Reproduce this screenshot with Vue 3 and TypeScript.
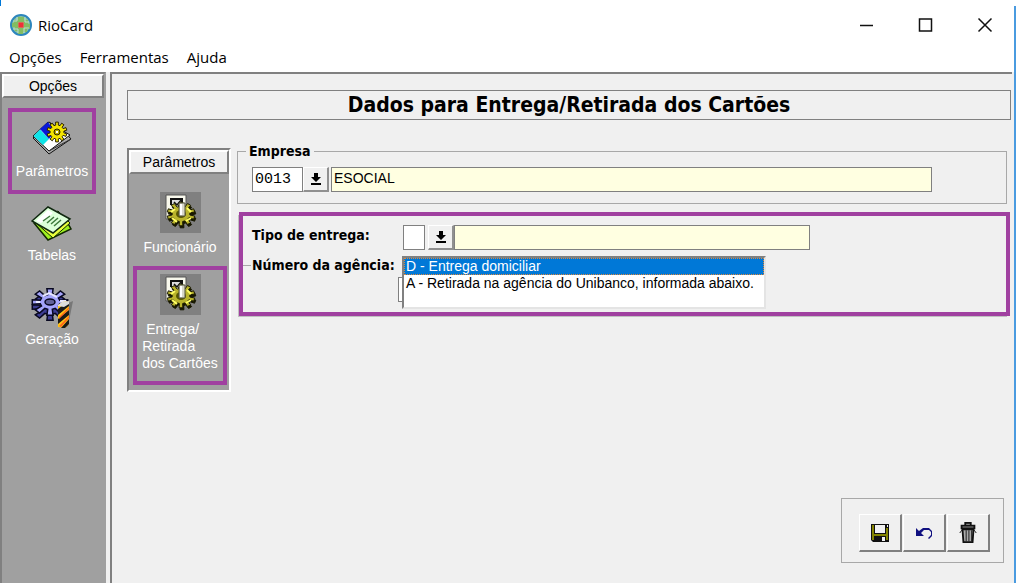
<script setup lang="ts">
import { ref } from 'vue'

interface DeliveryType {
  code: string
  text: string
}

interface SubItem {
  lines: string[]
  marked: boolean
}

const menus: string[] = ['Opções', 'Ferramentas', 'Ajuda']
const subItems: SubItem[] = [
  { lines: ['Funcionário'], marked: false },
  { lines: ['\u00a0Entrega/', 'Retirada', 'dos Cartões'], marked: true },
]
const companyCode = ref('0013')
const companyName = ref('ESOCIAL')
const typeCode = ref('')
const typeName = ref('')
const agency = ref('')
const selectedType = ref('D')
const deliveryTypes: DeliveryType[] = [
  { code: 'D', text: 'D - Entrega domiciliar' },
  { code: 'A', text: 'A - Retirada na agência do Unibanco, informada abaixo.' },
]

function gear(cx: number, cy: number, inner: number, outer: number, teeth: number, squash = 1): string {
  const points: string[] = []
  const step = (Math.PI * 2) / teeth
  for (let i = 0; i < teeth; i++) {
    const a = i * step - Math.PI / 2
    const corners: [number, number][] = [
      [inner, -0.3],
      [outer, -0.22],
      [outer, 0.22],
      [inner, 0.3],
    ]
    for (const [r, offset] of corners) {
      const t = a + offset * step
      points.push(`${(cx + r * Math.cos(t)).toFixed(1)} ${(cy + r * squash * Math.sin(t)).toFixed(1)}`)
    }
  }
  return `M${points.join('L')}Z`
}

const yellowGear = gear(26, 14, 7, 10, 10)
const blueGear = gear(19, 16, 10, 18, 8, 0.75)
const goldGear = gear(21, 22, 9, 14, 10, 0.85)
</script>

<template>
  <div class="desktop">
    <div class="window">
      <header class="titlebar">
        <svg class="logo" viewBox="0 0 22 22" aria-hidden="true">
          <circle cx="11" cy="11" r="10" fill="#8cc5a0" stroke="#2d86bd" stroke-width="2" />
          <path d="M4 6h4V3h6v3h4v4h2v5h-3v3h-4v2H8v-3H5v-4H2V9h2z" fill="#83bd62" />
          <path d="M3 7h4V3M15 3v5h4M3 15h5v4M14 19v-5h5" fill="none" stroke="#b9dcd3" stroke-width="1" />
          <path d="M8 8h6v6H8z" fill="#b9a574" />
          <path d="M8.500 8.500h5v5h-5z" fill="#ef3038" />
        </svg>
        <span class="app-name">RioCard</span>
        <div class="window-buttons">
          <button type="button" aria-label="Minimizar">
            <svg viewBox="0 0 16 16"><path d="M1 8.500h13" /></svg>
          </button>
          <button type="button" aria-label="Maximizar">
            <svg viewBox="0 0 16 16"><path d="M1.500 2h12v12h-12z" /></svg>
          </button>
          <button type="button" aria-label="Fechar">
            <svg viewBox="0 0 16 16"><path d="M1.500 1.500l13 13M14.500 1.500l-13 13" /></svg>
          </button>
        </div>
      </header>

      <nav class="menubar">
        <button v-for="menu in menus" :key="menu" type="button">{{ menu }}</button>
      </nav>

      <div class="body">
        <aside class="sidebar">
          <button type="button" class="group-head">Opções</button>
          <div class="side-items">
            <button type="button" class="side-item marked">
              <svg viewBox="0 0 42 44" aria-hidden="true">
                <path d="M2 20L18 36L40 21L34 14L18 4Z" fill="#aaa" stroke="#111" />
                <path d="M2 18L17 4L39 17L18 33Z" fill="#fff" stroke="#111" />
                <path d="M2.500 18L9 11.500L18 21L12 27Z" fill="#10e4e8" />
                <path d="M9 11L17 4L24 14L18 21Z" fill="#0818d8" />
                <path d="M18 33L40 21" stroke="#333" fill="none" />
                <path :d="yellowGear" fill="#f4e500" stroke="#292200" />
                <circle cx="26" cy="14" r="3" fill="#b8ad00" stroke="#292200" />
                <path d="M25 13h2v2h-2z" fill="#fff" />
              </svg>
              <span>Parâmetros</span>
            </button>
            <button type="button" class="side-item">
              <svg viewBox="0 0 42 44" aria-hidden="true">
                <path d="M3 21L17 38L40 27L35 18Z" fill="#9ef01e" stroke="#102800" stroke-width="1.500" />
                <path d="M4 20L22 36L39 21L27 9Z" fill="#e8ff3c" stroke="#102800" />
                <path d="M1 19L17 5L39 17L22 31Z" fill="#dcffd9" stroke="#102810" stroke-width="1.500" />
                <path d="M5 19L17 8L22 11L10 21Z" fill="#fff" />
                <path d="M12 19L19 14M16 21L23 15M20 22L27 16M23 24L30 18" stroke="#3d793c" stroke-width="1.500" />
              </svg>
              <span>Tabelas</span>
            </button>
            <button type="button" class="side-item">
              <svg viewBox="0 0 42 44" aria-hidden="true">
                <path d="M35 18L42 15L37 40L33 42Z" fill="#777" />
                <path :d="blueGear" transform="translate(0 5)" fill="#3c3c92" stroke="#080820" stroke-width="1.500" />
                <path :d="blueGear" fill="#a4a4fa" stroke="#080820" stroke-width="1.500" />
                <path d="M12 10L18 7L26 11M9 16H5M29 15H35" stroke="#e7e7ff" stroke-width="2" fill="none" />
                <ellipse cx="19" cy="16" rx="5" ry="3" fill="#626298" stroke="#080820" stroke-width="1.500" />
                <path d="M27 19L31 16L38 15V38L34 42L27 41Z" fill="#ffc515" />
                <path d="M27 23L37 15H38V20L27 29ZM27 33L38 24V29L27 38ZM30 42L38 33V38L34 42Z" fill="#191919" />
                <path d="M28 31L38 21V23L28 33ZM28 40L38 30V32L30 41Z" fill="#ff651b" />
                <path d="M27 19L31 16L38 15V18L33 21L27 20Z" fill="#ddd" />
              </svg>
              <span>Geração</span>
            </button>
          </div>
        </aside>

        <main class="main">
          <h1>Dados para Entrega/Retirada dos Cartões</h1>
          <div class="content">
            <section class="subpanel">
              <button type="button" class="group-head">Parâmetros</button>
              <div class="sub-items">
                <button
                  v-for="item in subItems"
                  :key="item.lines[0]"
                  type="button"
                  class="sub-item"
                  :class="{ marked: item.marked }"
                >
                  <svg viewBox="0 0 41 41" aria-hidden="true">
                    <path d="M0 0H41V41H0Z" fill="#808080" />
                    <path d="M6 3H26V27H6Z" fill="#f8f8ec" stroke="#555" />
                    <path d="M11 13V7H22V14H18" fill="#ddd" stroke="#111" stroke-width="2" />
                    <path d="M14 10L17 13L22 7" fill="none" stroke="#111" stroke-width="1.500" />
                    <path :d="goldGear" transform="translate(1 2)" fill="#171700" stroke="#171700" />
                    <path :d="goldGear" fill="#b9b42c" stroke="#171700" />
                    <path d="M11 20L15 17M27 16L31 20M12 26L17 30M26 29L31 26" stroke="#ffff65" stroke-width="2" />
                    <ellipse cx="21" cy="22" rx="5" ry="4" fill="#565600" />
                    <path d="M19 11H25V24H19Z" fill="#d7d7ca" stroke="#55553c" />
                    <path d="M20 12H22V23H20Z" fill="#fff" />
                  </svg>
                  <span class="caption">
                    <span v-for="line in item.lines" :key="line">{{ line }}</span>
                  </span>
                </button>
              </div>
            </section>

            <form class="form" @submit.prevent>
              <fieldset class="company">
                <legend>Empresa</legend>
                <div class="field-row">
                  <input v-model="companyCode" class="code" aria-label="Código da empresa" />
                  <button type="button" class="drop" aria-label="Escolher empresa">
                    <svg viewBox="0 0 12 14"><path d="M4 1H8V5H11L6 10L1 5H4ZM1 11H11V13H1Z" /></svg>
                  </button>
                  <input v-model="companyName" class="name company-name" aria-label="Nome da empresa" readonly />
                </div>
              </fieldset>

              <div class="delivery">
                <div class="field-row">
                  <label for="type-code">Tipo de entrega:</label>
                  <input id="type-code" v-model="typeCode" class="type-code" />
                  <button type="button" class="drop type-drop" aria-label="Escolher tipo de entrega">
                    <svg viewBox="0 0 12 14"><path d="M4 1H8V5H11L6 10L1 5H4ZM1 11H11V13H1Z" /></svg>
                  </button>
                  <input v-model="typeName" class="name type-name" aria-label="Descrição do tipo de entrega" readonly />
                </div>
                <div class="agency-row">
                  <label for="agency">Número da agência:</label>
                  <div class="agency-anchor">
                    <input id="agency" v-model="agency" class="agency" />
                    <select v-model="selectedType" class="options" size="3" aria-label="Tipo de entrega">
                      <option v-for="item in deliveryTypes" :key="item.code" :value="item.code">{{ item.text }}</option>
                    </select>
                  </div>
                </div>
              </div>
            </form>
          </div>

          <div class="toolbar">
            <button type="button" aria-label="Salvar">
              <svg viewBox="0 0 20 20">
                <path d="M1 1H19V19H3L1 17Z" fill="#111" />
                <path d="M2 2H4V17H2ZM16 5H18V17H16ZM4 11H16V13H4Z" fill="#858500" />
                <path d="M5 2H15V10H5ZM12 14H15V18H12ZM17 2H18V4H17Z" fill="#f2f2f2" />
              </svg>
            </button>
            <button type="button" aria-label="Desfazer">
              <svg viewBox="0 0 20 20">
                <path d="M2 5V13H10L7 10L10 7H15L17 9V12L14 15L15 16L18 13V8L15 5H9L5 8Z" fill="#101080" />
              </svg>
            </button>
            <button type="button" aria-label="Excluir">
              <svg viewBox="0 0 20 24">
                <path d="M7 3V1H13V3M3 4H17V7H3Z" fill="#888" stroke="#111" stroke-width="2" />
                <path d="M4 8H16L15 22H5Z" fill="#aaa" stroke="#111" stroke-width="2" />
                <path d="M8 9V21M11 9V21M14 9V21M4 8L1 12M16 8L19 12" fill="none" stroke="#111" />
              </svg>
            </button>
          </div>
        </main>
      </div>
    </div>
  </div>
</template>

<style>
body {
  margin: 0;
  background: #fff;
}
</style>

<style scoped>
* {
  box-sizing: border-box;
}
button,
input,
select {
  margin: 0;
  padding: 0;
  border: 0;
  border-radius: 0;
  background: none;
  color: inherit;
  font: inherit;
  outline: none;
}
svg {
  display: block;
}
.desktop {
  min-height: 100vh;
  padding: 6px 4px 0 0;
  display: flex;
  background: linear-gradient(#0078d7, #0078d7) 0 0 / 1px 6px no-repeat #fff;
  font: 14px/18px "Liberation Sans", Arial, sans-serif;
  color: #000;
}
.window {
  flex: 1;
  min-width: 0;
  display: flex;
  flex-direction: column;
  border-right: 2px solid #4a9be0;
}
.titlebar {
  height: 38px;
  display: flex;
  align-items: center;
  padding-left: 10px;
  font: 15px/20px "Open Sans", "Noto Sans", sans-serif;
}
.logo {
  width: 22px;
  height: 22px;
  margin-right: 6px;
}
.window-buttons {
  margin-left: auto;
  display: flex;
  align-self: stretch;
}
.window-buttons button {
  width: 59px;
  display: flex;
  align-items: center;
  justify-content: center;
}
.window-buttons svg {
  width: 16px;
  height: 16px;
  fill: none;
  stroke: #111;
  stroke-width: 1.500;
}
.menubar {
  height: 28px;
  display: flex;
  align-items: center;
  gap: 18px;
  padding: 0 0 2px 9px;
  font: 15px/20px "Open Sans", "Noto Sans", sans-serif;
}
.body {
  flex: 1;
  display: flex;
  background: #f0f0f0;
}
.sidebar {
  width: 106px;
  flex: none;
  border: 2px solid #808080;
  border-right-color: #a0a0a0;
  border-bottom: 0;
  background: #a0a0a0;
}
.group-head {
  display: block;
  width: 100%;
  height: 24px;
  border: 2px solid #fff;
  border-right-color: #808080;
  border-bottom-color: #808080;
  background: #f0f0f0;
  font-size: 14px;
}
.side-items {
  display: flex;
  flex-direction: column;
  padding: 10px 8px 10px 6px;
}
.side-item {
  height: 84px;
  display: flex;
  flex-direction: column;
  align-items: center;
  padding-top: 4px;
  border: 4px solid transparent;
  color: #fff;
  font-size: 14px;
  white-space: nowrap;
}
.side-item svg {
  width: 42px;
  height: 44px;
}
.side-item.marked {
  height: 86px;
  padding-top: 6px;
}
.side-item.marked,
.sub-item.marked {
  border-color: #a040a0;
}
.main {
  flex: 1;
  min-width: 0;
  display: flex;
  flex-direction: column;
  margin-left: 4px;
  margin-right: 2px;
  padding: 16px 1px 20px 15px;
  border-top: 2px solid #808080;
  border-left: 2px solid #808080;
}
h1 {
  margin: 0;
  height: 30px;
  border: 1px solid #808080;
  font: bold 21px/28px "DejaVu Sans Condensed", Tahoma, sans-serif;
  text-align: center;
}
.content {
  display: flex;
  align-items: flex-start;
  gap: 6px;
  padding-top: 22px;
}
.subpanel {
  width: 104px;
  flex: none;
  margin-top: 6px;
  border: 2px solid #808080;
  border-right-color: #fff;
  border-bottom-color: #fff;
  background: #a0a0a0;
}
.sub-items {
  padding: 12px 2px 5px 4px;
}
.sub-item {
  width: 94px;
  display: flex;
  flex-direction: column;
  align-items: center;
  gap: 6px;
  padding: 2px 0 6px;
  border: 4px solid transparent;
  color: #fff;
  font-size: 14px;
  line-height: 17px;
  white-space: nowrap;
}
.sub-item.marked {
  padding: 4px 0 9px;
}
.sub-item svg {
  width: 41px;
  height: 41px;
}
.caption {
  display: flex;
  flex-direction: column;
  text-align: left;
}
.form {
  flex: 1;
  min-width: 0;
}
legend,
label {
  font: bold 14px/18px "DejaVu Sans Condensed", Tahoma, sans-serif;
}
.company {
  min-width: 0;
  margin: 0 4px 8px 0;
  padding: 7px 10px 11px 14px;
  border: 1px solid #a8a8a8;
}
legend {
  margin-left: -6px;
  padding: 0 3px;
}
.field-row {
  display: flex;
  align-items: center;
}
input {
  height: 25px;
  border: 1px solid #808080;
  background: #fff;
}
.code {
  width: 51px;
  padding-left: 2px;
  font: 15px/20px "Liberation Mono", monospace;
}
.drop {
  width: 26px;
  height: 25px;
  margin-right: 2px;
  display: flex;
  align-items: center;
  justify-content: center;
  border: 1px solid #fff;
  border-right: 2px solid #909090;
  border-bottom: 2px solid #909090;
}
.drop svg {
  width: 12px;
  height: 14px;
}
.name {
  background: #ffffe1;
}
.company-name {
  flex: 0 1 601px;
  min-width: 0;
  padding: 0 0 4px 2px;
}
.delivery {
  margin: 0 1px 0 2px;
  height: 104px;
  padding: 9px 10px 0 9px;
  border: 4px solid #a040a0;
  box-shadow: -2px 2px 0 -1px #c0c0c0;
}
.delivery .field-row label {
  width: 151px;
  padding-bottom: 6px;
}
.type-code {
  width: 22px;
}
.type-drop {
  margin-left: 3px;
  margin-right: 0;
}
.type-name {
  flex: 0 1 356px;
  min-width: 0;
}
.agency-row {
  display: flex;
  align-items: flex-start;
  padding-top: 6px;
}
.agency-row label {
  width: 146px;
  white-space: nowrap;
}
.agency-row::before {
  content: "";
  width: 8px;
  height: 1px;
  margin: 9px 1px 0 -9px;
  background: #a8a8a8;
}
.agency-anchor {
  position: relative;
  padding-top: 21px;
}
.agency {
  width: 80px;
}
.options {
  position: absolute;
  left: 4px;
  top: 0;
  width: 364px;
  height: 53px;
  appearance: none;
  overflow: hidden;
  border: 2px solid #808080;
  border-right-color: #e4e4e4;
  border-bottom-color: #e4e4e4;
  background: #fff;
  font-size: 14px;
}
.options option {
  height: 17px;
  min-height: 17px;
  padding: 0 2px;
  line-height: 17px;
  color: #000;
}
.options option:checked {
  background: linear-gradient(#0078d7, #0078d7);
  color: #fff;
  outline: 1px dotted #e08a3c;
  outline-offset: -1px;
}
.toolbar {
  align-self: flex-end;
  display: flex;
  gap: 1px;
  margin-top: auto;
  margin-right: 7px;
  padding: 15px 13px 10px 17px;
  border: 1px solid #a8a8a8;
}
.toolbar button {
  width: 43px;
  height: 38px;
  display: flex;
  align-items: center;
  justify-content: center;
  border: 1px solid #fff;
  border-right: 2px solid #808080;
  border-bottom: 2px solid #808080;
}
.toolbar svg {
  width: 20px;
  height: 22px;
}
</style>
